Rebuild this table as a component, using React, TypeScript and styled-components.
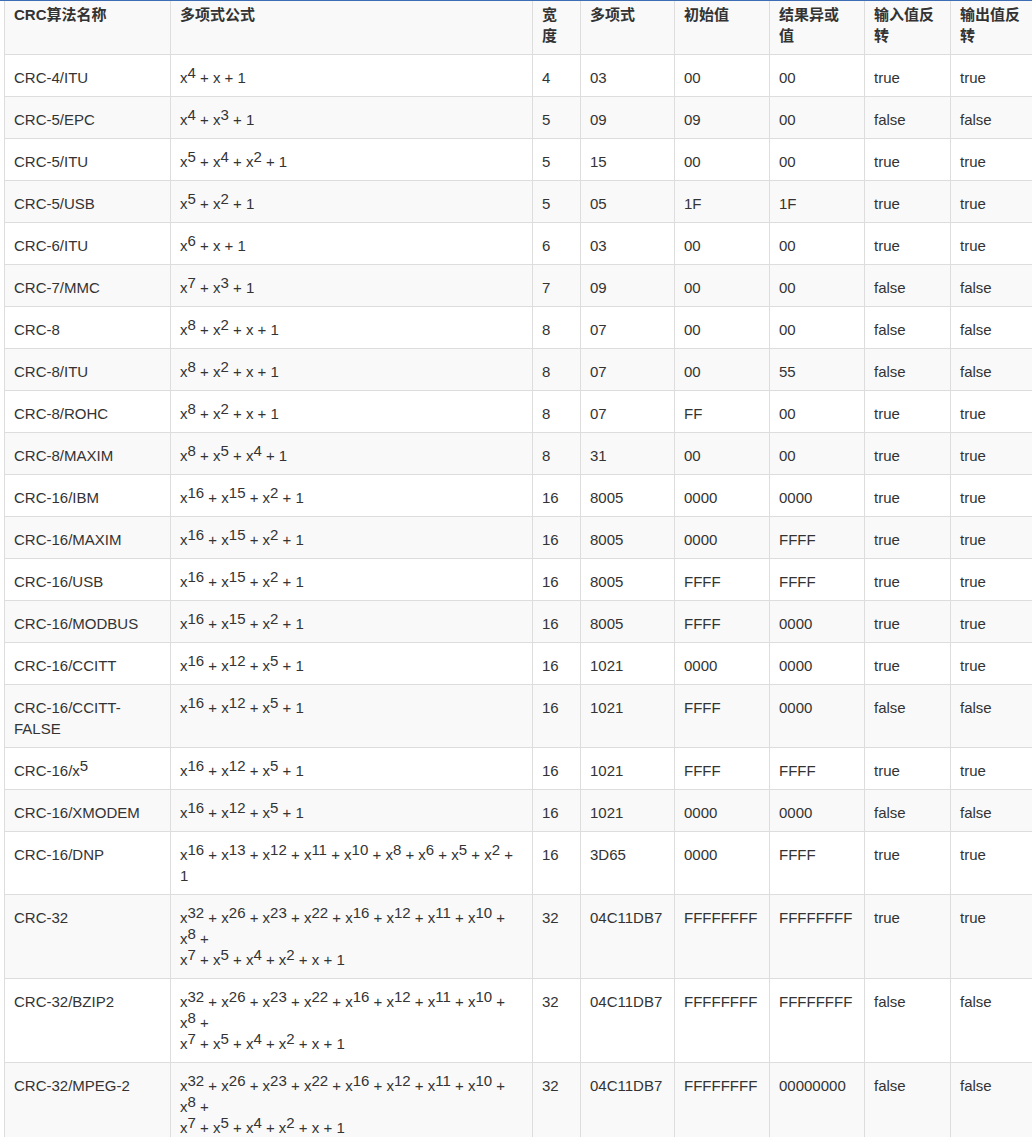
import React from "react";
import styled, { createGlobalStyle } from "styled-components";

const GlobalStyle = createGlobalStyle`
  html, body {
    margin: 0;
    padding: 0;
    background: #ffffff;
    overflow: hidden;
  }
  body {
    font-family: "Liberation Sans", Arial, "Noto Sans CJK SC", sans-serif;
    font-size: 15px;
    line-height: 21px;
    color: #333333;
  }
`;

const Frame = styled.div`
  border-top: 1px solid #3d6db5;
  height: 1136px;
  overflow: hidden;
`;

const Table = styled.table`
  margin: -6px 0 0 4px;
  width: 1032px;
  table-layout: fixed;
  border-collapse: collapse;
  border-spacing: 0;
  border: 1px solid #dddddd;
`;

const Row = styled.tr<{ $striped: boolean }>`
  background: ${(p) => (p.$striped ? "#f9f9f9" : "#ffffff")};
`;

const HeadCell = styled.th`
  padding: 8px 8px 8px 9px;
  border: 1px solid #dddddd;
  text-align: left;
  vertical-align: baseline;
  font-weight: bold;
  line-height: 21px;
`;

const Cell = styled.td`
  padding: 8px 8px 8px 9px;
  border: 1px solid #dddddd;
  text-align: left;
  vertical-align: baseline;
  line-height: 21px;
`;

const Sup = styled.sup<{ $tight?: boolean }>`
  font-size: 15px;
  vertical-align: 5px;
  line-height: ${(p) => (p.$tight ? "10px" : "19px")};
`;

const columnWidths = [166, 362, 48, 94, 95, 95, 86, 86];

const headers = [
  "CRC算法名称",
  "多项式公式",
  "宽\n度",
  "多项式",
  "初始值",
  "结果异或\n值",
  "输入值反\n转",
  "输出值反\n转",
];

type CrcRow = [string, string, string, string, string, string, string, string];

const P16a = "x^16 + x^15 + x^2 + 1";
const P16b = "x^16 + x^12 + x^5 + 1";
const P32 =
  "x^32 + x^26 + x^23 + x^22 + x^16 + x^12 + x^11 + x^10 +\nx^8 +\nx^7 + x^5 + x^4 + x^2 + x + 1";

const rows: CrcRow[] = [
  ["CRC-4/ITU", "x^4 + x + 1", "4", "03", "00", "00", "true", "true"],
  ["CRC-5/EPC", "x^4 + x^3 + 1", "5", "09", "09", "00", "false", "false"],
  ["CRC-5/ITU", "x^5 + x^4 + x^2 + 1", "5", "15", "00", "00", "true", "true"],
  ["CRC-5/USB", "x^5 + x^2 + 1", "5", "05", "1F", "1F", "true", "true"],
  ["CRC-6/ITU", "x^6 + x + 1", "6", "03", "00", "00", "true", "true"],
  ["CRC-7/MMC", "x^7 + x^3 + 1", "7", "09", "00", "00", "false", "false"],
  ["CRC-8", "x^8 + x^2 + x + 1", "8", "07", "00", "00", "false", "false"],
  ["CRC-8/ITU", "x^8 + x^2 + x + 1", "8", "07", "00", "55", "false", "false"],
  ["CRC-8/ROHC", "x^8 + x^2 + x + 1", "8", "07", "FF", "00", "true", "true"],
  ["CRC-8/MAXIM", "x^8 + x^5 + x^4 + 1", "8", "31", "00", "00", "true", "true"],
  ["CRC-16/IBM", P16a, "16", "8005", "0000", "0000", "true", "true"],
  ["CRC-16/MAXIM", P16a, "16", "8005", "0000", "FFFF", "true", "true"],
  ["CRC-16/USB", P16a, "16", "8005", "FFFF", "FFFF", "true", "true"],
  ["CRC-16/MODBUS", P16a, "16", "8005", "FFFF", "0000", "true", "true"],
  ["CRC-16/CCITT", P16b, "16", "1021", "0000", "0000", "true", "true"],
  ["CRC-16/CCITT-\nFALSE", P16b, "16", "1021", "FFFF", "0000", "false", "false"],
  ["CRC-16/x^5", P16b, "16", "1021", "FFFF", "FFFF", "true", "true"],
  ["CRC-16/XMODEM", P16b, "16", "1021", "0000", "0000", "false", "false"],
  [
    "CRC-16/DNP",
    "x^16 + x^13 + x^12 + x^11 + x^10 + x^8 + x^6 + x^5 + x^2 +\n1",
    "16",
    "3D65",
    "0000",
    "FFFF",
    "true",
    "true",
  ],
  ["CRC-32", P32, "32", "04C11DB7", "FFFFFFFF", "FFFFFFFF", "true", "true"],
  ["CRC-32/BZIP2", P32, "32", "04C11DB7", "FFFFFFFF", "FFFFFFFF", "false", "false"],
  ["CRC-32/MPEG-2", P32, "32", "04C11DB7", "FFFFFFFF", "00000000", "false", "false"],
];

function RichText({ text }: { text: string }) {
  const lines = text.split("\n");
  return (
    <>
      {lines.map((line, li) => {
        const parts = line.split(/x\^(\d+)/);
        return (
          <React.Fragment key={li}>
            {li > 0 && <br />}
            {parts.map((part, pi) =>
              pi % 2 === 1 ? (
                <React.Fragment key={pi}>
                  x<Sup $tight={li > 0}>{part}</Sup>
                </React.Fragment>
              ) : (
                <React.Fragment key={pi}>{part}</React.Fragment>
              )
            )}
          </React.Fragment>
        );
      })}
    </>
  );
}

export default function App() {
  return (
    <>
      <GlobalStyle />
      <Frame>
        <Table>
          <colgroup>
            {columnWidths.map((w, i) => (
              <col key={i} style={{ width: w }} />
            ))}
          </colgroup>
          <tbody>
            <Row $striped>
              {headers.map((h, i) => (
                <HeadCell key={i}>
                  <RichText text={h} />
                </HeadCell>
              ))}
            </Row>
            {rows.map((r, ri) => (
              <Row key={ri} $striped={ri % 2 === 1}>
                {r.map((c, ci) => (
                  <Cell key={ci}>
                    <RichText text={c} />
                  </Cell>
                ))}
              </Row>
            ))}
          </tbody>
        </Table>
      </Frame>
    </>
  );
}
